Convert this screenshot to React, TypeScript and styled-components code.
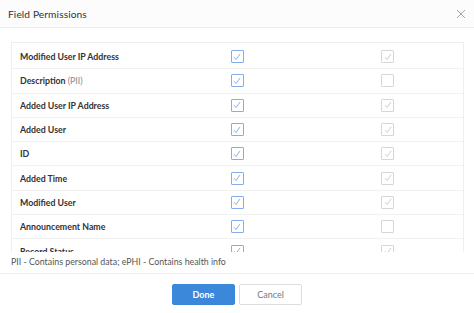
import styled, { createGlobalStyle } from "styled-components";

const GlobalStyle = createGlobalStyle`
  html, body {
    margin: 0;
    padding: 0;
    background: #fff;
  }
  body {
    font-family: Lato, "Open Sans", sans-serif;
    color: #333;
  }
`;

type Field = { name: string; tag?: string; read: boolean };

const FIELDS: Field[] = [
  { name: "Modified User IP Address", read: true },
  { name: "Description", tag: "(PII)", read: false },
  { name: "Added User IP Address", read: true },
  { name: "Added User", read: true },
  { name: "ID", read: true },
  { name: "Added Time", read: true },
  { name: "Modified User", read: true },
  { name: "Announcement Name", read: false },
  { name: "Record Status", read: true },
];

const Dialog = styled.div`
  width: 474px;
  height: 313px;
  display: flex;
  flex-direction: column;
  overflow: hidden;
`;

const Header = styled.div`
  height: 28px;
  flex: none;
  display: flex;
  align-items: center;
  justify-content: space-between;
  padding: 0 8px;
  background: #fcfcfc;
  border-bottom: 1px solid #ededed;
  box-sizing: border-box;
`;

const Title = styled.h1`
  margin: 0;
  font-size: 10.2px;
  font-weight: 400;
  color: #333;
  letter-spacing: 0.1px;
`;

const Close = styled.button`
  border: none;
  background: none;
  padding: 0;
  width: 10px;
  height: 10px;
  display: flex;
  cursor: pointer;
`;

const Body = styled.div`
  padding: 14px 10px 0 11px;
`;

// scroll area of the permissions table; last row is cut like in the list
const TableWrap = styled.div`
  height: 210px;
  overflow: hidden;
  border: 1px solid #eeeeee;
  border-bottom: none;
  padding-top: 2px;
  box-sizing: border-box;
`;

const Row = styled.div`
  display: grid;
  grid-template-columns: 150px 1fr 1fr;
  align-items: center;
  height: 24.3px;
  border-bottom: 1px solid #f1f1f1;
  box-sizing: border-box;
`;

const Name = styled.span`
  padding-left: 8px;
  font-size: 8.8px;
  font-weight: 700;
  color: #333;
  white-space: nowrap;
`;

const Tag = styled.span`
  font-weight: 400;
  color: #888;
`;

const Cell = styled.span`
  display: flex;
  justify-content: center;
`;

const Box = styled.span<{ $tone: "blue" | "gray" }>`
  width: 11px;
  height: 11px;
  border: 1px solid ${(p) => (p.$tone === "blue" ? "#86acea" : "#d6d6d6")};
  border-radius: 1px;
  display: flex;
  align-items: center;
  justify-content: center;
  color: ${(p) => (p.$tone === "blue" ? "#7fa5e2" : "#c6c6c6")};
`;

const Note = styled.p`
  margin: 4px 0 0 0;
  font-size: 8.8px;
  color: #555;
  line-height: 12px;
`;

const Footer = styled.div`
  margin-top: 5px;
  border-top: 1px solid #f0f0f0;
  display: flex;
  justify-content: center;
  gap: 4px;
  padding-top: 10px;
`;

const Button = styled.button<{ $primary?: boolean }>`
  width: 63px;
  height: 21px;
  font-family: Lato, sans-serif;
  font-size: 9px;
  border-radius: 2px;
  cursor: pointer;
  border: 1px solid ${(p) => (p.$primary ? "#3b87d9" : "#dddddd")};
  background: ${(p) => (p.$primary ? "#3b87d9" : "#fff")};
  color: ${(p) => (p.$primary ? "#fff" : "#777")};
  font-weight: ${(p) => (p.$primary ? 700 : 400)};
`;

function Check({ tone, checked }: { tone: "blue" | "gray"; checked: boolean }) {
  return (
    <Box $tone={tone}>
      {checked && (
        <svg width="8" height="8" viewBox="0 0 8 8" fill="none">
          <path d="M1 4.2 L3 6.5 L7 1" stroke="currentColor" strokeWidth="0.9" />
        </svg>
      )}
    </Box>
  );
}

export default function App() {
  return (
    <Dialog>
      <GlobalStyle />
      <Header>
        <Title>Field Permissions</Title>
        <Close aria-label="Close">
          <svg width="10" height="10" viewBox="0 0 10 10">
            <path d="M1 1 L9 9 M9 1 L1 9" stroke="#a5a5a5" strokeWidth="1" />
          </svg>
        </Close>
      </Header>
      <Body>
        <TableWrap>
          {FIELDS.map((f) => (
            <Row key={f.name}>
              <Name>
                {f.name} {f.tag && <Tag>{f.tag}</Tag>}
              </Name>
              <Cell>
                <Check tone="blue" checked />
              </Cell>
              <Cell>
                <Check tone="gray" checked={f.read} />
              </Cell>
            </Row>
          ))}
        </TableWrap>
        <Note>PII - Contains personal data; ePHI - Contains health info</Note>
      </Body>
      <Footer>
        <Button $primary>Done</Button>
        <Button>Cancel</Button>
      </Footer>
    </Dialog>
  );
}
